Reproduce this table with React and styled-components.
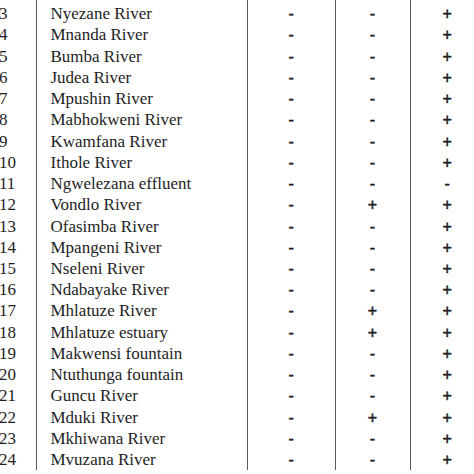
import React from 'react';
import styled, { createGlobalStyle } from 'styled-components';

const GlobalStyle = createGlobalStyle`
  html, body {
    margin: 0;
    padding: 0;
    background: #fff;
    overflow: hidden;
  }
`;

const rows = [
  [3, 'Nyezane River', '-', '-', '+'],
  [4, 'Mnanda River', '-', '-', '+'],
  [5, 'Bumba River', '-', '-', '+'],
  [6, 'Judea River', '-', '-', '+'],
  [7, 'Mpushin River', '-', '-', '+'],
  [8, 'Mabhokweni River', '-', '-', '+'],
  [9, 'Kwamfana River', '-', '-', '+'],
  [10, 'Ithole River', '-', '-', '+'],
  [11, 'Ngwelezana effluent', '-', '-', '-'],
  [12, 'Vondlo River', '-', '+', '+'],
  [13, 'Ofasimba River', '-', '-', '+'],
  [14, 'Mpangeni River', '-', '-', '+'],
  [15, 'Nseleni River', '-', '-', '+'],
  [16, 'Ndabayake River', '-', '-', '+'],
  [17, 'Mhlatuze River', '-', '+', '+'],
  [18, 'Mhlatuze estuary', '-', '+', '+'],
  [19, 'Makwensi fountain', '-', '-', '+'],
  [20, 'Ntuthunga fountain', '-', '-', '+'],
  [21, 'Guncu River', '-', '-', '+'],
  [22, 'Mduki River', '-', '+', '+'],
  [23, 'Mkhiwana River', '-', '-', '+'],
  [24, 'Mvuzana River', '-', '-', '+'],
];

const Table = styled.div`
  width: 484px;
  height: 474px;
  display: flex;
  flex-direction: column;
  color: #1e1e1e;
`;

const Row = styled.div`
  display: grid;
  grid-template-columns: 36px 211px 87.5px 75px 74.5px;
  flex: ${p => (p.$last ? '1 0 auto' : '0 0 auto')};
`;

const Cell = styled.div`
  box-sizing: border-box;
  height: ${p => (p.$first ? 24.4 : 21.24)}px;
  padding-top: ${p => (p.$first ? 3.16 : 0)}px;
  line-height: 21.24px;
  white-space: nowrap;
  border-left: ${p => (p.$line ? '1.5px solid #5a5a5a' : 'none')};
`;

const Num = styled(Cell)`
  font-family: 'Liberation Serif', 'Times New Roman', serif;
  font-size: 17px;
  margin-left: -1px;
`;

const Name = styled(Cell)`
  font-family: 'Liberation Serif', 'Times New Roman', serif;
  font-size: 17px;
  padding-left: 13.5px;
`;

const Mark = styled(Cell)`
  font-family: 'Liberation Sans', Arial, sans-serif;
  font-size: 16px;
  text-align: center;
  color: #222;
  -webkit-text-stroke: 0.5px #222;
`;

export default function App() {
  return (
    <>
      <GlobalStyle />
      <Table>
        {rows.map(([n, name, a, b, c], i) => {
          const first = i === 0;
          const last = i === rows.length - 1;
          return (
            <Row key={n} $last={last}>
              <Num $first={first}>{n}</Num>
              <Name $first={first} $line>{name}</Name>
              <Mark $first={first} $line>{a}</Mark>
              <Mark $first={first} $line>{b}</Mark>
              <Mark $first={first} $line>{c}</Mark>
            </Row>
          );
        })}
      </Table>
    </>
  );
}
